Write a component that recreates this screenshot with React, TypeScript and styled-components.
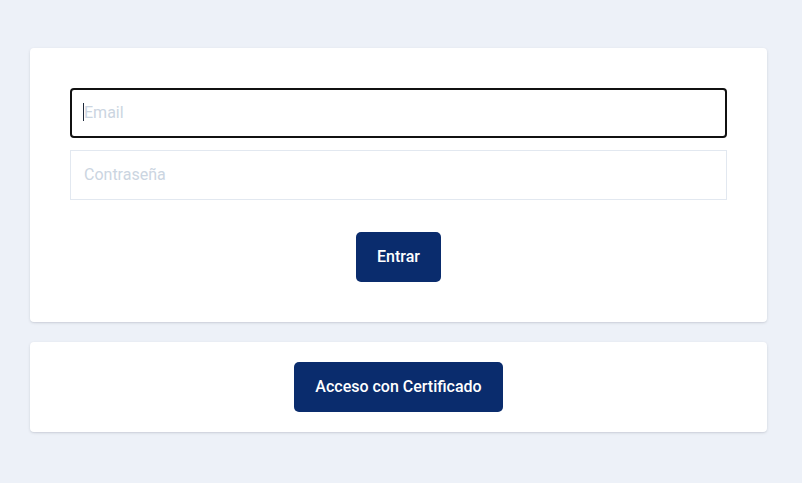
import React from "react";
import styled, { createGlobalStyle } from "styled-components";

const Global = createGlobalStyle`
  html, body { margin: 0; padding: 0; background: #edf1f8; }
  body { font-family: Roboto, "Noto Sans", "Liberation Sans", sans-serif; }
  * { box-sizing: border-box; }
`;

const Page = styled.div`
  min-height: 483px;
  padding: 48px 35px 0 30px;
  display: flex;
  flex-direction: column;
  gap: 20px;
`;

const Card = styled.div<{ $pad: string }>`
  background: #ffffff;
  border-radius: 4px;
  box-shadow: 0 1px 3px rgba(15, 23, 42, 0.12), 0 1px 1px rgba(15, 23, 42, 0.04);
  padding: ${(p) => p.$pad};
  display: flex;
  flex-direction: column;
  align-items: stretch;
`;

const Fields = styled.div`
  display: flex;
  flex-direction: column;
  gap: 12px;
`;

const FieldWrap = styled.div`
  position: relative;
`;

const Input = styled.input<{ $focused?: boolean }>`
  display: block;
  width: 100%;
  height: 50px;
  margin: 0;
  padding: 0 12px 2px;
  font-family: Roboto, "Noto Sans", "Liberation Sans", sans-serif;
  font-size: 16px;
  color: #1e293b;
  background: #ffffff;
  border: ${(p) => (p.$focused ? "2px solid #111111" : "1px solid #e2e8f0")};
  border-radius: ${(p) => (p.$focused ? "4px" : "0")};
  padding-left: ${(p) => (p.$focused ? "12px" : "13px")};
  outline: none;
  &::placeholder { color: #cbd5e1; opacity: 1; }
`;

const Caret = styled.span`
  position: absolute;
  left: 13px;
  top: 15px;
  width: 1px;
  height: 18px;
  background: #1e293b;
`;

const Actions = styled.div<{ $mt: string }>`
  display: flex;
  justify-content: center;
  margin-top: ${(p) => p.$mt};
`;

const Button = styled.button`
  height: 50px;
  padding: 0 21px 2px;
  border: none;
  border-radius: 5px;
  background: #0a2c6d;
  color: #ffffff;
  font-family: Roboto, "Noto Sans", "Liberation Sans", sans-serif;
  font-size: 16px;
  font-weight: 500;
  cursor: pointer;
`;

export default function App() {
  return (
    <>
      <Global />
      <Page>
        <Card $pad="40px 40px 40px 40px">
          <Fields>
            <FieldWrap>
              <Input $focused placeholder="Email" type="text" readOnly />
              <Caret />
            </FieldWrap>
            <FieldWrap>
              <Input placeholder="Contraseña" type="password" readOnly />
            </FieldWrap>
          </Fields>
          <Actions $mt="32px">
            <Button>Entrar</Button>
          </Actions>
        </Card>
        <Card $pad="20px 40px">
          <Actions $mt="0">
            <Button>Acceso con Certificado</Button>
          </Actions>
        </Card>
      </Page>
    </>
  );
}
